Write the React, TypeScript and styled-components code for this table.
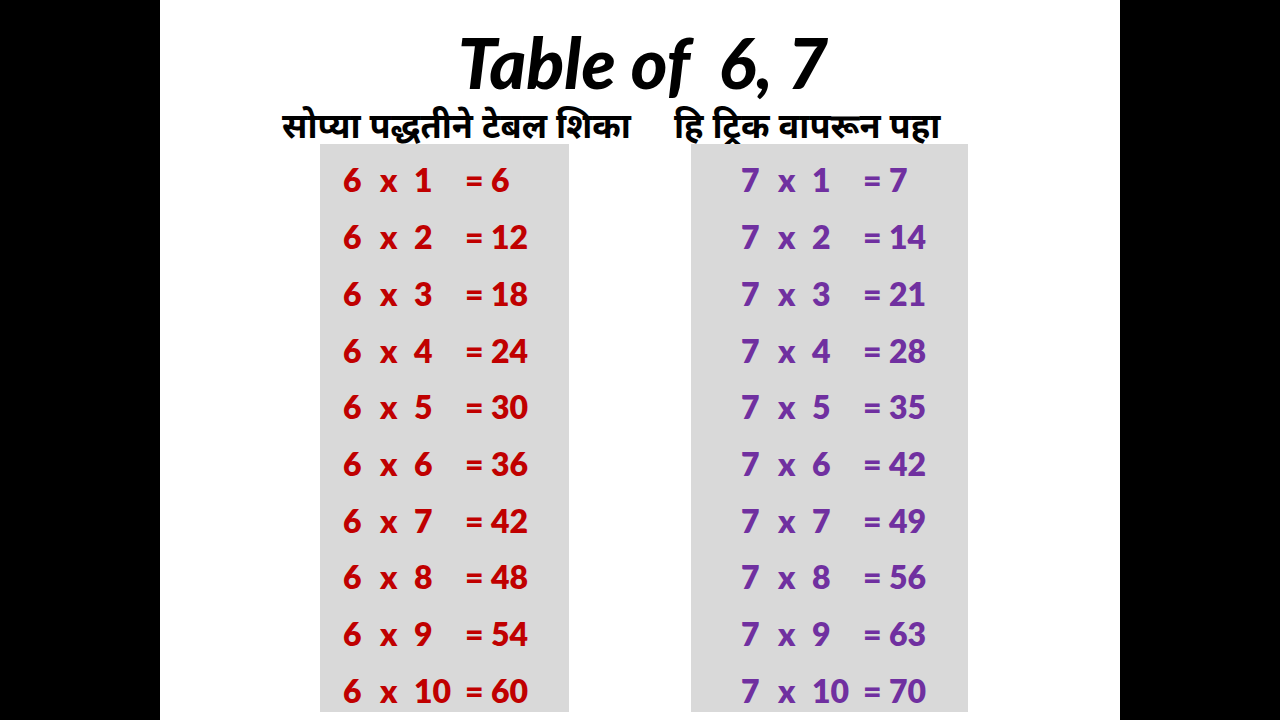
import React from "react";
import styled, { createGlobalStyle } from "styled-components";

const GlobalStyle = createGlobalStyle`
  html, body {
    margin: 0;
    padding: 0;
    background: #000;
  }
`;

const tables = [
  { base: 6, color: "#c00000", width: 249, padLeft: 23 },
  { base: 7, color: "#7030a0", width: 277, padLeft: 50 },
];

const rows = [1, 2, 3, 4, 5, 6, 7, 8, 9, 10];

function App() {
  return (
    <>
      <GlobalStyle />
      <Slide>
        <Title>Table of&nbsp; 6, 7</Title>
        <Subtitle>
          <span>सोप्या पद्धतीने टेबल शिका</span>
          <span>हि ट्रिक वापरून पहा</span>
        </Subtitle>
        <Columns>
          {tables.map((t) => (
            <TableBox key={t.base} $width={t.width} $padLeft={t.padLeft} $color={t.color}>
              {rows.map((n) => (
                <Row key={n}>
                  <span>{t.base}</span>
                  <span>x</span>
                  <span>{n}</span>
                  <span>= {t.base * n}</span>
                </Row>
              ))}
            </TableBox>
          ))}
        </Columns>
      </Slide>
    </>
  );
}

export default App;

const Slide = styled.div`
  width: 960px;
  height: 720px;
  margin: 0 auto;
  background: #fff;
  display: flex;
  flex-direction: column;
  overflow: hidden;
`;

const Title = styled.h1`
  margin: 22px 0 0;
  padding-left: 6px;
  font-family: Lato, "Open Sans", sans-serif;
  font-weight: 900;
  font-style: italic;
  font-size: 70px;
  line-height: 80px;
  text-align: center;
  color: #000;
`;

const Subtitle = styled.div`
  display: flex;
  gap: 43px;
  box-sizing: border-box;
  height: 42px;
  padding: 12px 0 0 122px;
  align-items: center;
  white-space: nowrap;
  font-family: "Noto Sans Devanagari", "Lohit Devanagari", "Noto Sans", sans-serif;
  font-weight: 700;
  font-size: 34.4px;
  color: #000;
`;

const Columns = styled.div`
  display: flex;
  align-items: flex-start;
  gap: 122px;
  padding-left: 160px;
`;

const TableBox = styled.div<{ $width: number; $padLeft: number; $color: string }>`
  width: ${(p) => p.$width}px;
  box-sizing: border-box;
  height: 568px;
  padding: 14px 0 0 ${(p) => p.$padLeft}px;
  background: #d9d9d9;
  display: flex;
  flex-direction: column;
  gap: 12.7px;
  color: ${(p) => p.$color};
  font-family: Lato, "Open Sans", sans-serif;
  font-weight: 800;
  font-size: 32px;
`;

const Row = styled.div`
  display: grid;
  grid-template-columns: 37px 34px 51px auto;
  height: 44px;
  align-items: center;
  white-space: nowrap;
`;
